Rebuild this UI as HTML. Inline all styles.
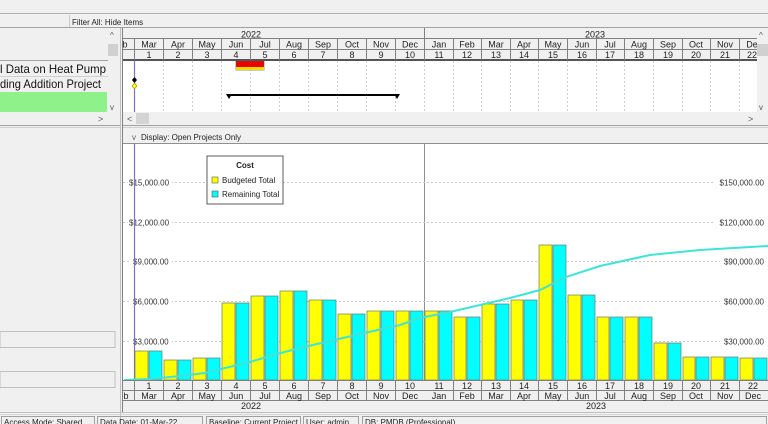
<!DOCTYPE html>
<html><head><meta charset="utf-8"><style>
html,body{margin:0;padding:0;width:768px;height:424px;overflow:hidden;background:#f0f0f0;font-family:"Liberation Sans",sans-serif;}
svg{position:absolute;left:0;top:0}
text{font-family:"Liberation Sans",sans-serif;}
</style></head><body>
<svg width="768" height="424" viewBox="0 0 768 424" xmlns="http://www.w3.org/2000/svg">
<rect x="0" y="0" width="768" height="424" fill="#f0f0f0"/>
<line x1="0" y1="13.5" x2="768" y2="13.5" stroke="#b0b0b0"/>
<line x1="0" y1="27.5" x2="768" y2="27.5" stroke="#a0a0a0"/>
<line x1="69.5" y1="15" x2="69.5" y2="27" stroke="#c8c8c8"/>
<text x="72" y="25" font-size="8" fill="#222">Filter All: Hide Items</text>

<rect x="0" y="28" width="108" height="84" fill="#f0f0f0"/>
<line x1="0" y1="60.5" x2="108" y2="60.5" stroke="#a0a0a0"/>
<line x1="0" y1="76.5" x2="108" y2="76.5" stroke="#d0d0d0"/>
<text x="0" y="73" font-size="12" fill="#111" textLength="106" lengthAdjust="spacingAndGlyphs">l Data on Heat Pump</text>
<text x="0" y="88" font-size="12" fill="#111" textLength="101" lengthAdjust="spacingAndGlyphs">ding Addition Project</text>
<rect x="0" y="92" width="107" height="20" fill="#8ef18a"/>
<rect x="108" y="28" width="12" height="84" fill="#f0f0f0"/>
<text x="110" y="38" font-size="8" fill="#555">^</text>
<rect x="108" y="44" width="10" height="12" fill="#d0d0d0"/>
<text x="110" y="110" font-size="8" fill="#555">v</text>
<text x="98" y="122" font-size="9" fill="#555">&gt;</text>
<line x1="0" y1="125.5" x2="120" y2="125.5" stroke="#a0a0a0"/>
<line x1="120.5" y1="28" x2="120.5" y2="424" stroke="#c0c0c0"/>
<line x1="122.5" y1="28" x2="122.5" y2="412" stroke="#808080"/>

<rect x="123" y="28" width="634" height="33" fill="#f0f0f0"/>
<text x="251" y="37.5" font-size="9" text-anchor="middle" fill="#222">2022</text>
<text x="595" y="37.5" font-size="9" text-anchor="middle" fill="#222">2023</text>
<line x1="424.5" y1="28" x2="424.5" y2="39" stroke="#808080"/>
<line x1="123" y1="38.5" x2="757" y2="38.5" stroke="#808080"/>
<line x1="123" y1="49.5" x2="757" y2="49.5" stroke="#808080"/>
<rect x="123" y="59" width="634" height="2" fill="#555"/>
<g stroke="#808080" stroke-width="1">
<line x1="134.5" y1="38" x2="134.5" y2="60"/><line x1="163.5" y1="38" x2="163.5" y2="60"/><line x1="192.5" y1="38" x2="192.5" y2="60"/><line x1="221.5" y1="38" x2="221.5" y2="60"/><line x1="250.5" y1="38" x2="250.5" y2="60"/><line x1="279.5" y1="38" x2="279.5" y2="60"/><line x1="308.5" y1="38" x2="308.5" y2="60"/><line x1="337.5" y1="38" x2="337.5" y2="60"/><line x1="366.5" y1="38" x2="366.5" y2="60"/><line x1="395.5" y1="38" x2="395.5" y2="60"/><line x1="424.5" y1="38" x2="424.5" y2="60"/><line x1="453.5" y1="38" x2="453.5" y2="60"/><line x1="481.5" y1="38" x2="481.5" y2="60"/><line x1="510.5" y1="38" x2="510.5" y2="60"/><line x1="538.5" y1="38" x2="538.5" y2="60"/><line x1="567.5" y1="38" x2="567.5" y2="60"/><line x1="596.5" y1="38" x2="596.5" y2="60"/><line x1="624.5" y1="38" x2="624.5" y2="60"/><line x1="653.5" y1="38" x2="653.5" y2="60"/><line x1="682.5" y1="38" x2="682.5" y2="60"/><line x1="710.5" y1="38" x2="710.5" y2="60"/><line x1="739.5" y1="38" x2="739.5" y2="60"/>
</g>
<g font-size="9" fill="#222" text-anchor="middle">
<text x="125" y="47.5">b</text>
<text x="149" y="47.5">Mar</text><text x="178" y="47.5">Apr</text><text x="207" y="47.5">May</text><text x="236" y="47.5">Jun</text><text x="265" y="47.5">Jul</text><text x="294" y="47.5">Aug</text><text x="323" y="47.5">Sep</text><text x="352" y="47.5">Oct</text><text x="381" y="47.5">Nov</text><text x="410" y="47.5">Dec</text><text x="439" y="47.5">Jan</text><text x="467" y="47.5">Feb</text><text x="496" y="47.5">Mar</text><text x="524" y="47.5">Apr</text><text x="553" y="47.5">May</text><text x="582" y="47.5">Jun</text><text x="610" y="47.5">Jul</text><text x="639" y="47.5">Aug</text><text x="668" y="47.5">Sep</text><text x="696" y="47.5">Oct</text><text x="725" y="47.5">Nov</text><text x="752" y="47.5">De</text>
<text x="149" y="58">1</text><text x="178" y="58">2</text><text x="207" y="58">3</text><text x="236" y="58">4</text><text x="265" y="58">5</text><text x="294" y="58">6</text><text x="323" y="58">7</text><text x="352" y="58">8</text><text x="381" y="58">9</text><text x="410" y="58">10</text><text x="439" y="58">11</text><text x="467" y="58">12</text><text x="496" y="58">13</text><text x="524" y="58">14</text><text x="553" y="58">15</text><text x="582" y="58">16</text><text x="610" y="58">17</text><text x="639" y="58">18</text><text x="668" y="58">19</text><text x="696" y="58">20</text><text x="725" y="58">21</text><text x="752" y="58">22</text>
</g>
<rect x="123" y="61" width="634" height="51" fill="#fff"/>
<g stroke="#d0d0d0" stroke-dasharray="2,2">
<line x1="163.5" y1="61" x2="163.5" y2="112"/><line x1="192.5" y1="61" x2="192.5" y2="112"/><line x1="221.5" y1="61" x2="221.5" y2="112"/><line x1="250.5" y1="61" x2="250.5" y2="112"/><line x1="279.5" y1="61" x2="279.5" y2="112"/><line x1="308.5" y1="61" x2="308.5" y2="112"/><line x1="337.5" y1="61" x2="337.5" y2="112"/><line x1="366.5" y1="61" x2="366.5" y2="112"/><line x1="395.5" y1="61" x2="395.5" y2="112"/><line x1="424.5" y1="61" x2="424.5" y2="112"/><line x1="453.5" y1="61" x2="453.5" y2="112"/><line x1="481.5" y1="61" x2="481.5" y2="112"/><line x1="510.5" y1="61" x2="510.5" y2="112"/><line x1="538.5" y1="61" x2="538.5" y2="112"/><line x1="567.5" y1="61" x2="567.5" y2="112"/><line x1="596.5" y1="61" x2="596.5" y2="112"/><line x1="624.5" y1="61" x2="624.5" y2="112"/><line x1="653.5" y1="61" x2="653.5" y2="112"/><line x1="682.5" y1="61" x2="682.5" y2="112"/><line x1="710.5" y1="61" x2="710.5" y2="112"/><line x1="739.5" y1="61" x2="739.5" y2="112"/>
</g>
<line x1="134.5" y1="61" x2="134.5" y2="112" stroke="#7b74c4" stroke-width="1.2"/>
<rect x="236" y="61" width="28" height="9" fill="#e00" stroke="#555" stroke-width="0.6"/>
<rect x="236" y="67" width="28" height="3" fill="#f0e000"/>
<path d="M134.5 77 L137 80 L134.5 83 L132 80 Z" fill="#000"/>
<path d="M134.5 83 L137 86 L134.5 89 L132 86 Z" fill="#ff0" stroke="#a09000" stroke-width="0.6"/>
<rect x="227" y="94" width="171" height="2" fill="#000"/>
<path d="M226 94 L232 94 L229 99 Z" fill="#000"/><path d="M394 94 L400 94 L397 99 Z" fill="#000"/>
<rect x="757" y="28" width="11" height="85" fill="#f0f0f0"/>
<text x="759" y="38" font-size="8" fill="#555">^</text>
<rect x="757" y="44" width="11" height="12" fill="#d0d0d0"/>
<text x="759" y="110" font-size="8" fill="#555">v</text>
<rect x="123" y="112" width="634" height="13" fill="#f0f0f0"/>
<text x="127" y="122" font-size="9" fill="#555">&lt;</text>
<rect x="136" y="113" width="13" height="11" fill="#d4d4d4"/>
<text x="748" y="122" font-size="9" fill="#555">&gt;</text>
<line x1="123" y1="125.5" x2="768" y2="125.5" stroke="#a0a0a0"/>
<line x1="123" y1="127.5" x2="768" y2="127.5" stroke="#d0d0d0"/>
<line x1="0" y1="127.5" x2="120" y2="127.5" stroke="#d0d0d0"/>

<text x="132" y="140" font-size="8" fill="#666">v</text>
<text x="141" y="140" font-size="8" fill="#222">Display: Open Projects Only</text>
<line x1="123" y1="143.5" x2="768" y2="143.5" stroke="#909090"/>

<rect x="0" y="331.5" width="115" height="16" fill="#f0f0f0" stroke="#c0c0c0"/>
<rect x="0" y="371.5" width="115" height="16" fill="#f0f0f0" stroke="#c0c0c0"/>

<rect x="123" y="144" width="645" height="236" fill="#fff"/>
<line x1="424.5" y1="144" x2="424.5" y2="411" stroke="#909090"/>
<g stroke="#c8c8c8" stroke-dasharray="2,2">
<line x1="123" y1="182.5" x2="768" y2="182.5"/><line x1="123" y1="222.5" x2="768" y2="222.5"/><line x1="123" y1="261.5" x2="768" y2="261.5"/><line x1="123" y1="301.5" x2="768" y2="301.5"/><line x1="123" y1="341.5" x2="768" y2="341.5"/>
</g>
<g font-size="8" fill="#333">
<rect x="128" y="177" width="44" height="10" fill="#fff"/><text x="129" y="185.5">$15,000.00</text>
<rect x="128" y="217" width="44" height="10" fill="#fff"/><text x="129" y="225.5">$12,000.00</text>
<rect x="131" y="256" width="41" height="10" fill="#fff"/><text x="133" y="264.5">$9,000.00</text>
<rect x="131" y="296" width="41" height="10" fill="#fff"/><text x="133" y="304.5">$6,000.00</text>
<rect x="131" y="336" width="41" height="10" fill="#fff"/><text x="133" y="344.5">$3,000.00</text>
<g text-anchor="end">
<rect x="715" y="177" width="53" height="10" fill="#fff"/><text x="764" y="185.5">$150,000.00</text>
<rect x="715" y="217" width="53" height="10" fill="#fff"/><text x="764" y="225.5">$120,000.00</text>
<rect x="720" y="256" width="48" height="10" fill="#fff"/><text x="764" y="264.5">$90,000.00</text>
<rect x="720" y="296" width="48" height="10" fill="#fff"/><text x="764" y="304.5">$60,000.00</text>
<rect x="720" y="336" width="48" height="10" fill="#fff"/><text x="764" y="344.5">$30,000.00</text>
</g>
</g>
<line x1="134.5" y1="144" x2="134.5" y2="380" stroke="#7b74c4" stroke-width="1.2"/>
<g stroke="#6a7a6a" stroke-width="0.7">
<rect x="135" y="351" width="13" height="29" fill="#ff0"/><rect x="149" y="351" width="13" height="29" fill="#0ff"/>
<rect x="164" y="360" width="13" height="20" fill="#ff0"/><rect x="178" y="360" width="13" height="20" fill="#0ff"/>
<rect x="193" y="358" width="13" height="22" fill="#ff0"/><rect x="207" y="358" width="13" height="22" fill="#0ff"/>
<rect x="222" y="303" width="13" height="77" fill="#ff0"/><rect x="236" y="303" width="13" height="77" fill="#0ff"/>
<rect x="251" y="296" width="13" height="84" fill="#ff0"/><rect x="265" y="296" width="13" height="84" fill="#0ff"/>
<rect x="280" y="291" width="13" height="89" fill="#ff0"/><rect x="294" y="291" width="13" height="89" fill="#0ff"/>
<rect x="309" y="300" width="13" height="80" fill="#ff0"/><rect x="323" y="300" width="13" height="80" fill="#0ff"/>
<rect x="338" y="314" width="13" height="66" fill="#ff0"/><rect x="352" y="314" width="13" height="66" fill="#0ff"/>
<rect x="367" y="311" width="13" height="69" fill="#ff0"/><rect x="381" y="311" width="13" height="69" fill="#0ff"/>
<rect x="396" y="311" width="13" height="69" fill="#ff0"/><rect x="410" y="311" width="13" height="69" fill="#0ff"/>
<rect x="425" y="311" width="13" height="69" fill="#ff0"/><rect x="439" y="311" width="13" height="69" fill="#0ff"/>
<rect x="454" y="317" width="12" height="63" fill="#ff0"/><rect x="467" y="317" width="13" height="63" fill="#0ff"/>
<rect x="482" y="304" width="13" height="76" fill="#ff0"/><rect x="496" y="304" width="13" height="76" fill="#0ff"/>
<rect x="511" y="300" width="12" height="80" fill="#ff0"/><rect x="524" y="300" width="13" height="80" fill="#0ff"/>
<rect x="539" y="245" width="13" height="135" fill="#ff0"/><rect x="553" y="245" width="13" height="135" fill="#0ff"/>
<rect x="568" y="295" width="13" height="85" fill="#ff0"/><rect x="582" y="295" width="13" height="85" fill="#0ff"/>
<rect x="597" y="317" width="12" height="63" fill="#ff0"/><rect x="610" y="317" width="13" height="63" fill="#0ff"/>
<rect x="625" y="317" width="13" height="63" fill="#ff0"/><rect x="639" y="317" width="13" height="63" fill="#0ff"/>
<rect x="654" y="343" width="13" height="37" fill="#ff0"/><rect x="668" y="343" width="13" height="37" fill="#0ff"/>
<rect x="683" y="357" width="12" height="23" fill="#ff0"/><rect x="696" y="357" width="13" height="23" fill="#0ff"/>
<rect x="711" y="357" width="13" height="23" fill="#ff0"/><rect x="725" y="357" width="13" height="23" fill="#0ff"/>
<rect x="740" y="358" width="13" height="22" fill="#ff0"/><rect x="754" y="358" width="13" height="22" fill="#0ff"/>
</g>
<polyline fill="none" stroke="#3fe3d8" stroke-width="2" points="124,380 150,379 180,376 205,373 225,368 250,362 273,355 300,348 330,341 360,334 400,325 420,318 450,312 480,305 510,298 540,290 566,277 600,266 650,255 700,250 768,246"/>
<rect x="207" y="156" width="76" height="48" fill="#fff" stroke="#333" stroke-width="0.8"/>
<text x="245" y="168" font-size="8" font-weight="bold" text-anchor="middle" fill="#222">Cost</text>
<rect x="212" y="177" width="6" height="6" fill="#ff0" stroke="#555" stroke-width="0.6"/>
<text x="222" y="183" font-size="8" fill="#222">Budgeted Total</text>
<rect x="212" y="191" width="6" height="6" fill="#0ff" stroke="#555" stroke-width="0.6"/>
<text x="222" y="197" font-size="8" fill="#222">Remaining Total</text>

<rect x="123" y="380" width="645" height="31" fill="#f0f0f0"/>
<line x1="123" y1="380.5" x2="768" y2="380.5" stroke="#808080"/>
<line x1="123" y1="390.5" x2="768" y2="390.5" stroke="#808080"/>
<line x1="123" y1="400.5" x2="768" y2="400.5" stroke="#808080"/>
<g stroke="#808080">
<line x1="134.5" y1="380" x2="134.5" y2="401"/><line x1="163.5" y1="380" x2="163.5" y2="401"/><line x1="192.5" y1="380" x2="192.5" y2="401"/><line x1="221.5" y1="380" x2="221.5" y2="401"/><line x1="250.5" y1="380" x2="250.5" y2="401"/><line x1="279.5" y1="380" x2="279.5" y2="401"/><line x1="308.5" y1="380" x2="308.5" y2="401"/><line x1="337.5" y1="380" x2="337.5" y2="401"/><line x1="366.5" y1="380" x2="366.5" y2="401"/><line x1="395.5" y1="380" x2="395.5" y2="401"/><line x1="453.5" y1="380" x2="453.5" y2="401"/><line x1="481.5" y1="380" x2="481.5" y2="401"/><line x1="510.5" y1="380" x2="510.5" y2="401"/><line x1="538.5" y1="380" x2="538.5" y2="401"/><line x1="567.5" y1="380" x2="567.5" y2="401"/><line x1="596.5" y1="380" x2="596.5" y2="401"/><line x1="624.5" y1="380" x2="624.5" y2="401"/><line x1="653.5" y1="380" x2="653.5" y2="401"/><line x1="682.5" y1="380" x2="682.5" y2="401"/><line x1="710.5" y1="380" x2="710.5" y2="401"/><line x1="739.5" y1="380" x2="739.5" y2="401"/>
</g>
<g font-size="9" fill="#222" text-anchor="middle">
<text x="149" y="389">1</text><text x="178" y="389">2</text><text x="207" y="389">3</text><text x="236" y="389">4</text><text x="265" y="389">5</text><text x="294" y="389">6</text><text x="323" y="389">7</text><text x="352" y="389">8</text><text x="381" y="389">9</text><text x="410" y="389">10</text><text x="439" y="389">11</text><text x="467" y="389">12</text><text x="496" y="389">13</text><text x="524" y="389">14</text><text x="553" y="389">15</text><text x="582" y="389">16</text><text x="610" y="389">17</text><text x="639" y="389">18</text><text x="668" y="389">19</text><text x="696" y="389">20</text><text x="725" y="389">21</text><text x="753" y="389">22</text>
<text x="126" y="399">b</text>
<text x="149" y="399">Mar</text><text x="178" y="399">Apr</text><text x="207" y="399">May</text><text x="236" y="399">Jun</text><text x="265" y="399">Jul</text><text x="294" y="399">Aug</text><text x="323" y="399">Sep</text><text x="352" y="399">Oct</text><text x="381" y="399">Nov</text><text x="410" y="399">Dec</text><text x="439" y="399">Jan</text><text x="467" y="399">Feb</text><text x="496" y="399">Mar</text><text x="524" y="399">Apr</text><text x="553" y="399">May</text><text x="582" y="399">Jun</text><text x="610" y="399">Jul</text><text x="639" y="399">Aug</text><text x="668" y="399">Sep</text><text x="696" y="399">Oct</text><text x="725" y="399">Nov</text><text x="753" y="399">Dec</text>
<text x="251" y="409">2022</text><text x="596" y="409">2023</text>
</g>
<line x1="0" y1="412.5" x2="768" y2="412.5" stroke="#c0c0c0"/>
<line x1="0" y1="414.5" x2="768" y2="414.5" stroke="#d8d8d8"/>
<g fill="none" stroke="#a0a0a0">
<rect x="1.5" y="416.5" width="93" height="10"/><rect x="97.5" y="416.5" width="105" height="10"/><rect x="206.5" y="416.5" width="94" height="10"/><rect x="303.5" y="416.5" width="55" height="10"/><rect x="362.5" y="416.5" width="404" height="10"/>
</g>
<g font-size="8" fill="#222">
<text x="4" y="425">Access Mode: Shared</text><text x="100" y="425">Data Date: 01-Mar-22</text><text x="209" y="425">Baseline: Current Project</text><text x="306" y="425">User: admin</text><text x="365" y="425">DB: PMDB (Professional)</text>
</g>
</svg>
</body></html>
